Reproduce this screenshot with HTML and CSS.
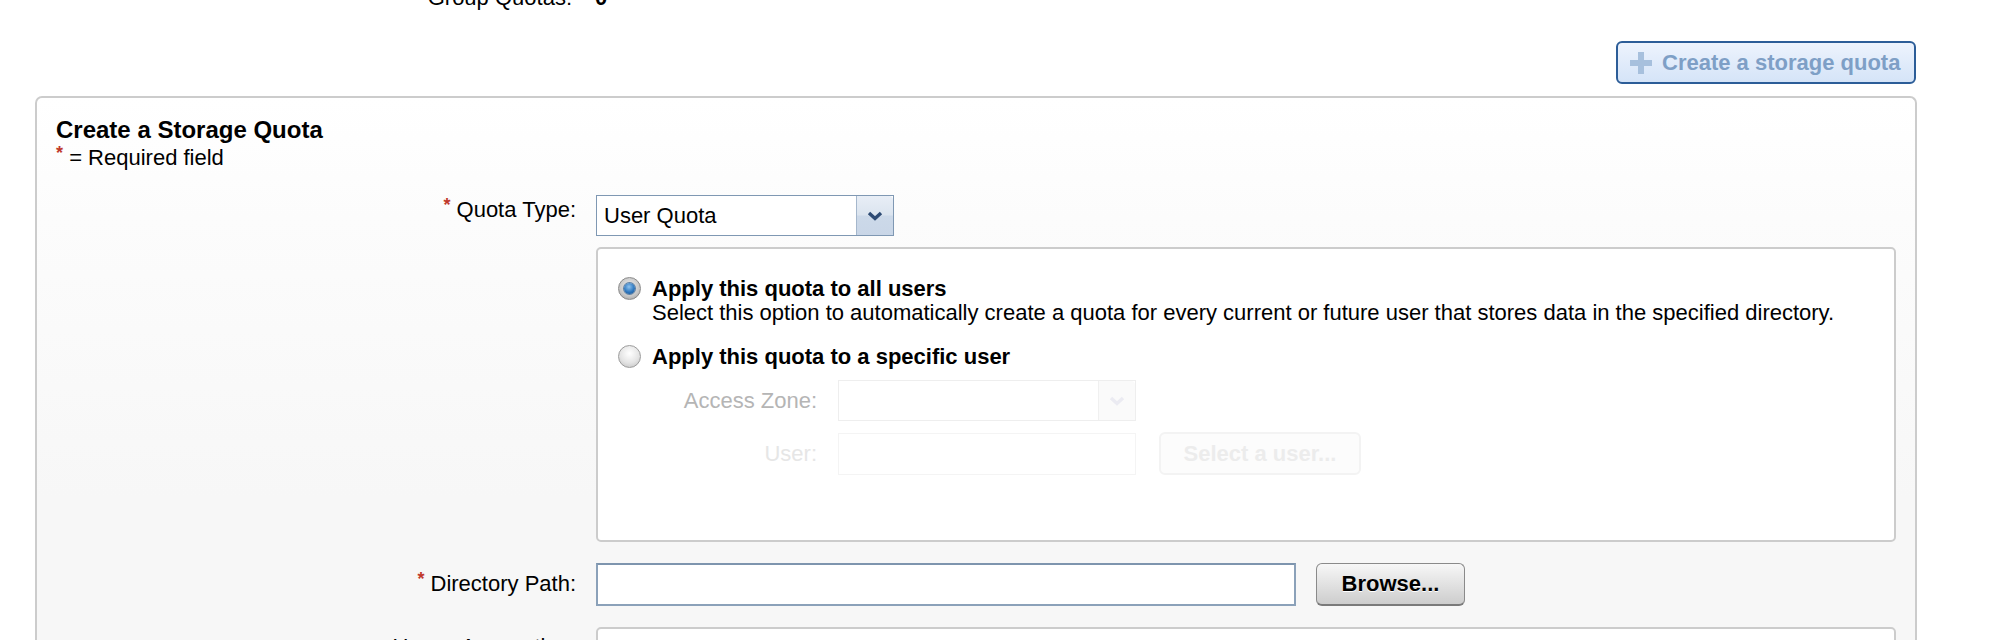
FILE: index.html
```html
<!DOCTYPE html>
<html lang="en">
<head>
<meta charset="utf-8">
<title>Create a Storage Quota</title>
<link rel="stylesheet" href="styles.css">
</head>
<body>
<div class="page">
  <div class="summary">
    <span class="sum-label">Group Quotas:</span>
    <span class="sum-value">0</span>
  </div>

  <div class="actions">
    <button class="btn-create" type="button">
      <svg class="plus" width="22" height="22" viewBox="0 0 22 22" aria-hidden="true">
        <rect x="8" y="0" width="6" height="22" fill="#a7c0dd"/>
        <rect x="0" y="8" width="22" height="6" fill="#a7c0dd"/>
      </svg>
      <span class="btn-create-text">Create a storage quota</span>
    </button>
  </div>

  <section class="panel">
    <h2 class="panel-title">Create a Storage Quota</h2>
    <div class="req-note"><span class="req">*</span> = Required field</div>

    <div class="form">
      <div class="row row-quota">
        <div class="lbl lbl-quota"><span class="req">*</span> Quota Type:</div>
        <div class="field">
          <div class="select">
            <span class="select-value">User Quota</span>
            <span class="select-arrow">
              <svg width="16" height="10" viewBox="0 0 16 10" aria-hidden="true"><polyline points="2,2 8,7.5 14,2" fill="none" stroke="#2d4b74" stroke-width="3.4" stroke-linejoin="miter"/></svg>
            </span>
          </div>
        </div>
      </div>

      <div class="row row-box">
        <div class="lbl"></div>
        <div class="field field-wide">
          <div class="optbox">
            <div class="opt">
              <span class="radio radio-on"></span>
              <div class="opt-text">
                <div class="opt-title">Apply this quota to all users</div>
                <div class="opt-desc">Select this option to automatically create a quota for every current or future user that stores data in the specified directory.</div>
              </div>
            </div>
            <div class="opt opt-second">
              <span class="radio"></span>
              <div class="opt-text">
                <div class="opt-title">Apply this quota to a specific user</div>
              </div>
            </div>
            <div class="subrow subrow-zone">
              <div class="sublbl">Access Zone:</div>
              <div class="select select-disabled">
                <span class="select-value"></span>
                <span class="select-arrow">
                  <svg width="16" height="10" viewBox="0 0 16 10" aria-hidden="true"><polyline points="2,2 8,7.5 14,2" fill="none" stroke="#ebebf2" stroke-width="3.4"/></svg>
                </span>
              </div>
            </div>
            <div class="subrow subrow-user">
              <div class="sublbl sublbl-faint">User:</div>
              <div class="input input-disabled"></div>
              <button class="btn-select" type="button">Select a user...</button>
            </div>
          </div>
        </div>
      </div>

      <div class="row row-dir">
        <div class="lbl"><span class="req">*</span> Directory Path:</div>
        <div class="field field-inline">
          <div class="input input-dir"></div>
          <button class="btn-browse" type="button">Browse...</button>
        </div>
      </div>

      <div class="row row-usage">
        <div class="lbl lbl-top">Usage Accounting:</div>
        <div class="field field-wide">
          <div class="optbox optbox-usage"></div>
        </div>
      </div>
    </div>
  </section>
</div>
</body>
</html>
```

FILE: styles.css
```css
html, body {
  margin: 0;
  padding: 0;
  background: #ffffff;
  overflow: hidden;
}

body {
  font-family: "Liberation Sans", Arial, Helvetica, sans-serif;
  font-size: 22px;
  color: #000;
}

.page {
  padding: 0 89px 0 35px;
}

/* summary line at top (cut off) */
.summary {
  display: flex;
  gap: 23px;
  margin-top: -15px;
  line-height: 26px;
}
.sum-label {
  width: 537px;
  text-align: right;
}
.sum-value {
  font-weight: bold;
}

/* create button */
.actions {
  display: flex;
  justify-content: flex-end;
  margin-top: 30px;
  padding-right: 1px;
}
.btn-create {
  display: flex;
  align-items: center;
  justify-content: flex-start;
  gap: 10px;
  height: 43px;
  width: 300px;
  box-sizing: border-box;
  padding: 0 0 0 12px;
  border: 2px solid #2c5d98;
  border-radius: 6px;
  background: linear-gradient(#edf3fd, #d5e4f8);
  font-family: "Liberation Sans", Arial, sans-serif;
  font-size: 22px;
  font-weight: bold;
  color: #7e9fc6;
  white-space: nowrap;
}
.btn-create-text {
  white-space: nowrap;
}
.plus {
  flex: none;
}

/* panel */
.panel {
  margin-top: 12px;
  border: 2px solid #cccccc;
  border-bottom: none;
  border-radius: 7px 7px 0 0;
  background: linear-gradient(#ffffff 0px, #fcfcfc 120px, #f7f7f7 400px, #f7f7f7);
  padding-top: 18px;
  min-height: 560px;
  box-sizing: border-box;
}
.panel-title {
  margin: 0;
  padding-left: 19px;
  font-size: 24px;
  line-height: 28px;
  font-weight: bold;
}
.req-note {
  padding-left: 19px;
  margin-top: 2px;
  line-height: 24px;
}
.req {
  color: #c0392b;
  font-size: 18px;
  position: relative;
  top: -6px;
  font-weight: bold;
}

/* form grid */
.form {
  margin-top: 24px;
  padding-right: 19px;
}
.row {
  display: grid;
  grid-template-columns: 539px 1fr;
  column-gap: 20px;
  align-items: center;
}
.lbl {
  text-align: right;
  line-height: 24px;
  white-space: nowrap;
}
.lbl-quota {
  align-self: start;
  padding-top: 3px;
}
.lbl-top {
  align-self: start;
  padding-top: 8px;
}
.row-box {
  margin-top: 11px;
}
.row-dir {
  margin-top: 21px;
}
.row-usage {
  margin-top: 21px;
}

/* select */
.select {
  display: flex;
  width: 298px;
  height: 41px;
  box-sizing: border-box;
  border: 1px solid #7f98b3;
  background: #fff;
}
.select-value {
  flex: 1;
  display: flex;
  align-items: center;
  padding-left: 7px;
  line-height: 24px;
}
.select-arrow {
  width: 36px;
  display: flex;
  align-items: center;
  justify-content: center;
  border-left: 1px solid #a5b7cc;
  border-radius: 0 4px 0 0;
  background: linear-gradient(#e8eef6, #dbe4ef 48%, #ccd9e9 52%, #c9d6e7);
}
.select-disabled {
  border-color: #eeeeee;
}
.select-disabled .select-arrow {
  border-left-color: #f0f0f0;
  background: #fafafa;
}

/* option box */
.optbox {
  border: 2px solid #cccccc;
  border-radius: 5px;
  background: #ffffff;
  padding: 28px 20px 65px 20px;
}
.optbox-usage {
  height: 60px;
  padding: 0;
}
.opt {
  display: flex;
  gap: 11px;
  align-items: flex-start;
}
.opt-second {
  margin-top: 20px;
}
.opt-text {
  line-height: 24px;
}
.opt-title {
  font-weight: bold;
}
.radio {
  flex: none;
  width: 23px;
  height: 23px;
  margin-top: 0;
  box-sizing: border-box;
  border-radius: 50%;
  border: 1px solid #9c9c9c;
  background: radial-gradient(circle at 50% 35%, #ffffff 0%, #e4e4e4 55%, #bdbdbd 100%);
  display: flex;
  align-items: center;
  justify-content: center;
}
.radio-on {
  border-color: #8a8a8a;
  background: radial-gradient(circle at 50% 40%, #eeeeee 0%, #c6c6c6 60%, #959595 100%);
}
.radio-on::after {
  content: "";
  width: 11px;
  height: 11px;
  border-radius: 50%;
  background: radial-gradient(circle at 45% 35%, #8fc3ee 0%, #2f78bf 55%, #134d8c 100%);
  box-shadow: 0 0 0 1px #5d7fa3;
}

/* sub rows inside box */
.subrow {
  display: grid;
  grid-template-columns: 199px auto auto;
  column-gap: 21px;
  align-items: center;
  justify-content: start;
}
.subrow-zone {
  margin-top: 11px;
}
.subrow-user {
  margin-top: 11px;
  column-gap: 21px;
}
.sublbl {
  text-align: right;
  color: #b5b5b5;
  line-height: 24px;
}
.sublbl-faint {
  color: #e6e6e6;
}

.input {
  box-sizing: border-box;
  background: #fff;
}
.input-disabled {
  width: 298px;
  height: 42px;
  border: 1px solid #f4f4f4;
}
.btn-select {
  width: 202px;
  height: 43px;
  margin-left: 2px;
  box-sizing: border-box;
  border: 2px solid #f3f3f3;
  border-radius: 6px;
  background: #fcfcfc;
  font-family: "Liberation Sans", Arial, sans-serif;
  font-size: 22px;
  font-weight: bold;
  color: #ececec;
}

/* directory row */
.field-inline {
  display: flex;
  align-items: center;
  gap: 20px;
}
.input-dir {
  width: 700px;
  height: 43px;
  border: 2px solid #8ba1b9;
  border-top-color: #7e95ae;
}
.btn-browse {
  width: 149px;
  height: 43px;
  box-sizing: border-box;
  border: 1px solid #8a8a8a;
  border-bottom: 2px solid #7a7a7a;
  border-radius: 6px;
  background: linear-gradient(#f7f7f7, #e2e2e2 50%, #cdcdcd);
  font-family: "Liberation Sans", Arial, sans-serif;
  font-size: 22px;
  font-weight: bold;
  color: #000;
  text-shadow: 0 1px 0 #ffffff;
}
```
